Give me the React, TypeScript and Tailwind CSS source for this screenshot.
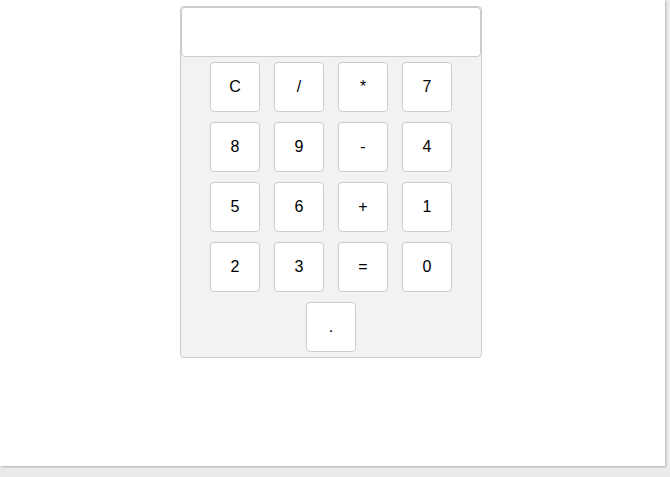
const keys = ["C", "/", "*", "7", "8", "9", "-", "4", "5", "6", "+", "1", "2", "3", "=", "0", "."];

export default function App() {
  return (
    <div className="w-[670px] h-[477px] bg-[#ebebeb] font-['Liberation_Sans',Arial,sans-serif]">
      <div className="w-[665px] h-[466px] bg-white shadow-[1px_1px_2px_rgba(0,0,0,0.25)] pt-[6px]">
        <div className="ml-[180px] w-[302px] border border-[#cccccc] rounded bg-[#f2f2f2]">
          <input className="block w-full h-[50px] border border-[#cccccc] rounded bg-white outline-none px-2 text-xl" />
          <div className="flex flex-wrap justify-center">
            {keys.map((k) => (
              <button
                key={k}
                className="w-[50px] h-[50px] mx-[7px] my-[5px] bg-white border border-[#cccccc] rounded text-base text-black"
              >
                {k}
              </button>
            ))}
          </div>
        </div>
      </div>
    </div>
  );
}
